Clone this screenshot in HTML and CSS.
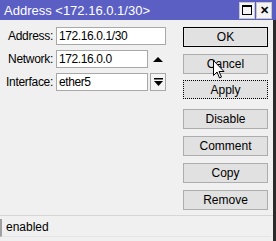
FILE: index.html
```html
<!DOCTYPE html>
<html lang="en">
<head>
    <meta charset="UTF-8">
    <title>Address &lt;172.16.0.1/30&gt;</title>
    <link rel="stylesheet" href="styles.css">
</head>
<body>
    <div class="window">
        <div class="titlebar">
            <span class="title">Address &lt;172.16.0.1/30&gt;</span>
            <div class="title-buttons">
                <span class="tbtn"><span class="max-box"></span></span>
                <span class="tbtn close">&#x2715;</span>
            </div>
        </div>
        <div class="content">
            <div class="form">
                <div class="row">
                    <label>Address:</label>
                    <input type="text" class="field wide" value="172.16.0.1/30">
                </div>
                <div class="row">
                    <label>Network:</label>
                    <input type="text" class="field" value="172.16.0.0">
                    <span class="arrow-up"></span>
                </div>
                <div class="row">
                    <label>Interface:</label>
                    <input type="text" class="field" value="ether5">
                    <span class="drop">
                        <svg width="9" height="9" viewBox="0 0 9 9"><rect x="0" y="0" width="9" height="1.5" fill="#000"/><path d="M0 3h9L4.5 8z" fill="#000"/></svg>
                    </span>
                </div>
            </div>
            <div class="buttons">
                <button class="btn default">OK</button>
                <button class="btn">Cancel</button>
                <button class="btn focus">Apply</button>
                <button class="btn gap">Disable</button>
                <button class="btn">Comment</button>
                <button class="btn">Copy</button>
                <button class="btn">Remove</button>
                <svg class="cursor" width="12" height="19" viewBox="0 0 12 19"><path d="M0.5 0.5v15l3.5-3.5 2.5 6 2-1-2.5-5.5h5z" fill="#fff" stroke="#000"/></svg>
            </div>
        </div>
        <div class="status">
            <span class="status-cell">enabled</span>
        </div>
    </div>
</body>
</html>
```

FILE: styles.css
```css
body {
    margin: 0;
    padding: 0;
    font-family: "Liberation Sans", Arial, sans-serif;
    font-size: 12px;
    background-color: #f0f0f0;
}

.window {
    width: 276px;
    height: 241px;
    display: flex;
    flex-direction: column;
    background-color: #f0f0f0;
    border-right: 3px solid #2b2b2b;
    box-sizing: border-box;
}

.titlebar {
    height: 20px;
    background-color: #5b5fc4;
    color: white;
    display: flex;
    align-items: center;
    justify-content: space-between;
    padding: 0 0 0 4px;
    flex-shrink: 0;
    margin-right: -3px;
}

.title {
    font-size: 13px;
}

.title-buttons {
    display: flex;
    gap: 1px;
    margin-right: 4px;
}

.tbtn {
    width: 14px;
    height: 15px;
    background-color: #f4f4f4;
    border: 1px solid #c8c8c8;
    display: flex;
    align-items: center;
    justify-content: center;
    color: #000;
    font-size: 11px;
    font-weight: bold;
}

.max-box {
    width: 8px;
    height: 7px;
    border: 1px solid #000;
    border-top-width: 2px;
}

.content {
    flex: 1;
    display: flex;
    padding: 7px 0 0 0;
}

.form {
    width: 183px;
    display: flex;
    flex-direction: column;
    gap: 5px;
}

.row {
    display: flex;
    align-items: center;
    height: 18px;
}

.row label {
    width: 53px;
    text-align: right;
    margin-right: 3px;
    color: #000;
    letter-spacing: -0.3px;
}

.field {
    width: 92px;
    height: 18px;
    box-sizing: border-box;
    border: 1px solid #a8a8a8;
    background-color: #fff;
    font-family: "Liberation Sans", Arial, sans-serif;
    font-size: 12px;
    letter-spacing: -0.4px;
    padding: 0 2px;
    margin: 0;
}

.field.wide {
    width: 110px;
}

.arrow-up {
    width: 0;
    height: 0;
    border-left: 5px solid transparent;
    border-right: 5px solid transparent;
    border-bottom: 5px solid #000;
    margin-left: 5px;
}

.drop {
    width: 16px;
    height: 18px;
    box-sizing: border-box;
    margin-left: 2px;
    border: 1px solid #a8a8a8;
    background-color: #f4f4f4;
    display: flex;
    align-items: center;
    justify-content: center;
}

.buttons {
    position: relative;
    display: flex;
    flex-direction: column;
    gap: 7px;
}

.btn {
    width: 85px;
    height: 20px;
    box-sizing: border-box;
    border: 1px solid #adadad;
    background-color: #e1e1e1;
    font-family: "Liberation Sans", Arial, sans-serif;
    font-size: 12px;
    color: #000;
    padding: 0;
    margin: 0;
}

.btn.default {
    border: 1px solid #000;
    box-shadow: inset 0 0 0 1px #e8e8e8;
}

.btn.focus {
    border: 1px dotted #000;
    height: 19px;
    margin-top: -1px;
}

.btn.gap {
    margin-top: 3px;
}

.cursor {
    position: absolute;
    left: 30px;
    top: 33px;
}

.status {
    height: 23px;
    flex-shrink: 0;
    border-top: 1px solid #d6d6d6;
    display: flex;
    align-items: center;
    padding: 0 2px 2px 0;
}

.status-cell {
    flex: 1;
    height: 17px;
    line-height: 17px;
    padding-left: 4px;
    border-left: 2px solid #a0a0a0;
    border-bottom: 1px solid #e4e4e4;
}
```
